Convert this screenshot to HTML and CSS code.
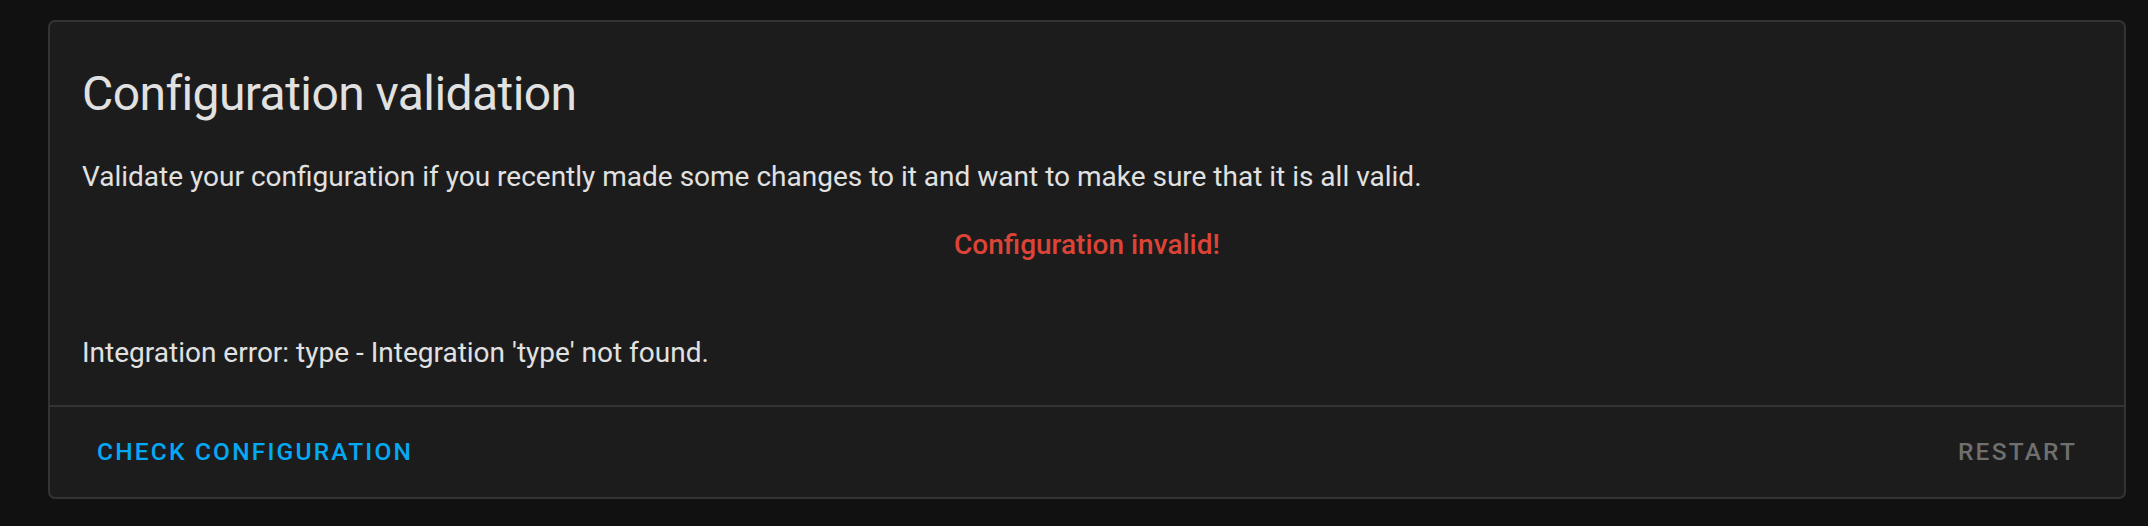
FILE: index.html
```html
<!DOCTYPE html>
<html lang="en">
<head>
<meta charset="utf-8">
<title>Configuration validation</title>
<link rel="stylesheet" href="styles.css">
</head>
<body>
  <div class="page">
    <section class="card">
      <h1 class="card-header">Configuration validation</h1>
      <div class="card-content">
        <p class="desc">Validate your configuration if you recently made some changes to it and want to make sure that it is all valid.</p>
        <div class="result">Configuration invalid!</div>
        <p class="error">Integration error: type - Integration 'type' not found.</p>
      </div>
      <div class="card-actions">
        <button class="btn btn-primary" type="button">Check configuration</button>
        <button class="btn btn-disabled" type="button" disabled>Restart</button>
      </div>
    </section>
  </div>
</body>
</html>
```

FILE: styles.css
```css
html, body {
  margin: 0;
  padding: 0;
  background: #111111;
  width: 2148px;
  height: 526px;
  overflow: hidden;
}

body {
  font-family: Roboto, "Noto Sans", "Liberation Sans", sans-serif;
  color: #e1e1e1;
}

.page {
  padding: 20px 22px 0 48px;
}

.card {
  background: #1c1c1c;
  border: 2px solid #333333;
  border-radius: 7px;
  box-sizing: border-box;
  height: 479px;
  display: flex;
  flex-direction: column;
}

.card-header {
  margin: 0;
  padding: 24px 32px 15px;
  font-size: 48px;
  font-weight: 400;
  letter-spacing: -0.012em;
  line-height: 96px;
  color: #e1e1e1;
}

.card-content {
  padding: 0 32px 32px;
  font-size: 28px;
  line-height: 40px;
}

.desc {
  margin: 0;
}

.result {
  margin-top: 28px;
  text-align: center;
  color: #db4437;
  font-weight: 500;
}

.error {
  margin: 68px 0 0;
}

.card-actions {
  border-top: 2px solid #333333;
  flex: 1;
  display: flex;
  align-items: center;
  justify-content: space-between;
  padding: 0 47px 0 47px;
}

.btn {
  background: none;
  border: 0;
  padding: 0;
  font-family: Roboto, "Noto Sans", "Liberation Sans", sans-serif;
  font-size: 24.5px;
  font-weight: 500;
  letter-spacing: 0.0892857em;
  text-transform: uppercase;
  line-height: 40px;
}

.btn-primary {
  color: #03a9f4;
}

.btn-disabled {
  color: #6f6f6f;
}
```
